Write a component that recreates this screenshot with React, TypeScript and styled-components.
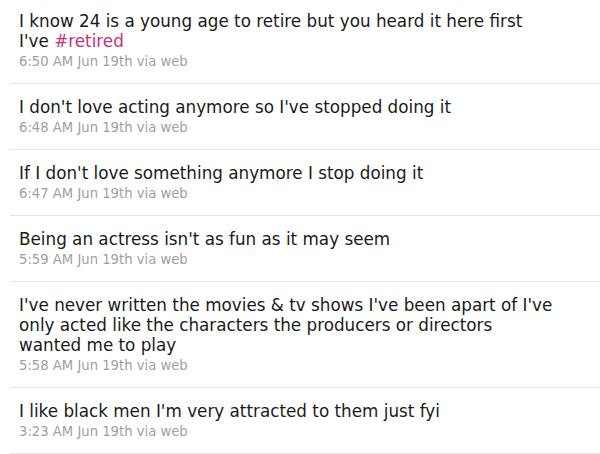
import React from "react";
import styled, { createGlobalStyle } from "styled-components";

const Global = createGlobalStyle`
  html, body { margin: 0; padding: 0; background: #ffffff; }
  body { width: 600px; height: 454px; overflow: hidden; }
`;

const List = styled.ol`
  list-style: none;
  margin: 0;
  padding: 0 0 0 10px;
  font-family: "DejaVu Sans", "Liberation Sans", sans-serif;
`;

const Row = styled.li`
  padding: 13px 0 11px 9px;
  border-bottom: 1px solid #e6e6e6;
  &:first-child { padding-top: 11px; }
`;

const Text = styled.div`
  font-size: 16.8px;
  line-height: 20px;
  color: #1a1a1a;
`;

const Tag = styled.span`
  color: #c7307a;
`;

const Meta = styled.div`
  font-size: 13.2px;
  line-height: 20px;
  color: #a0a0a0;
  margin-top: 1px;
`;

type Tweet = { text: React.ReactNode; time: string };

const tweets: Tweet[] = [
  {
    text: (
      <>
        I know 24 is a young age to retire but you heard it here first
        <br />
        I've <Tag>#retired</Tag>
      </>
    ),
    time: "6:50 AM Jun 19th",
  },
  { text: "I don't love acting anymore so I've stopped doing it", time: "6:48 AM Jun 19th" },
  { text: "If I don't love something anymore I stop doing it", time: "6:47 AM Jun 19th" },
  { text: "Being an actress isn't as fun as it may seem", time: "5:59 AM Jun 19th" },
  {
    text: (
      <>
        I've never written the movies &amp; tv shows I've been apart of I've
        <br />
        only acted like the characters the producers or directors
        <br />
        wanted me to play
      </>
    ),
    time: "5:58 AM Jun 19th",
  },
  { text: "I like black men I'm very attracted to them just fyi", time: "3:23 AM Jun 19th" },
];

export default function App() {
  return (
    <>
      <Global />
      <List>
        {tweets.map((t, i) => (
          <Row key={i}>
            <Text>{t.text}</Text>
            <Meta>{t.time} via web</Meta>
          </Row>
        ))}
      </List>
    </>
  );
}
